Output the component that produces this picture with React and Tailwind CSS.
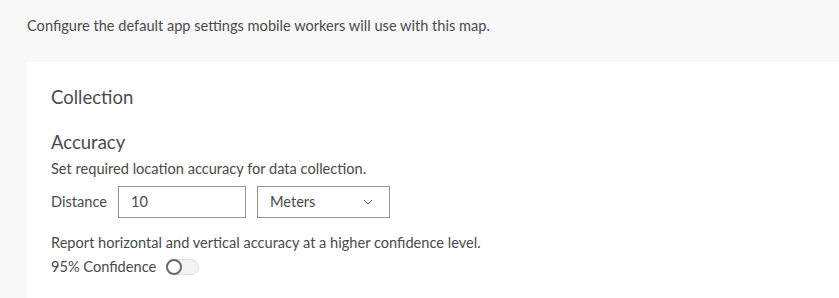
import React from "react";

export default function App() {
  return (
    <div className="w-[839px] h-[298px] overflow-hidden bg-[#f8f8f8] text-[#4a4a4a]" style={{ fontFamily: "Lato, 'Noto Sans', sans-serif" }}>
      <div className="pl-[27px] pt-[16px] text-[14.6px] leading-[20px]">
        Configure the default app settings mobile workers will use with this map.
      </div>
      <div className="ml-[27px] mt-[26px] bg-white h-[300px] pl-[24px] pt-[23px]">
        <h2 className="text-[18.5px] leading-[24px] text-[#4a4a4a]">Collection</h2>
        <h3 className="mt-[21px] text-[18.5px] leading-[24px]">Accuracy</h3>
        <p className="mt-[5px] text-[14.6px] leading-[20px]">Set required location accuracy for data collection.</p>
        <div className="mt-[7px] flex items-center gap-[11px]">
          <span className="text-[14.6px]">Distance</span>
          <div className="w-[128px] h-[32px] border border-[#959595] flex items-center px-[12px] text-[14.6px]">10</div>
          <div className="w-[133px] h-[32px] border border-[#959595] flex items-center justify-between pl-[12px] pr-[16px] text-[14.6px]">
            <span>Meters</span>
            <svg width="10" height="6" viewBox="0 0 10 6" fill="none" stroke="#6a6a6a" strokeWidth="1">
              <path d="M1 1l4 4 4-4" />
            </svg>
          </div>
        </div>
        <p className="mt-[15px] text-[14.6px] leading-[20px]">Report horizontal and vertical accuracy at a higher confidence level.</p>
        <div className="mt-[4px] flex items-center gap-[10px] text-[14.6px] leading-[20px]">
          <span>95% Confidence</span>
          <span className="relative w-[33px] h-[16px] rounded-full bg-[#f3f3f3] border border-[#dfdfdf]">
            <span className="absolute -left-[1px] -top-[1px] w-[16px] h-[16px] rounded-full bg-white border-2 border-[#6a6a6a]" />
          </span>
        </div>
      </div>
    </div>
  );
}
